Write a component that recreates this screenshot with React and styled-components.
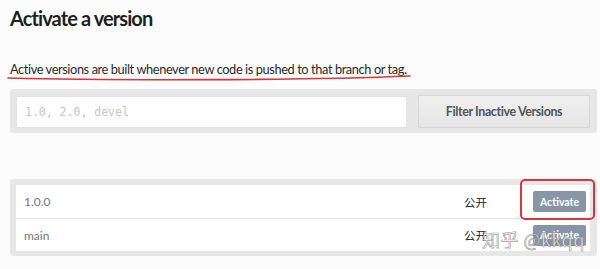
import styled, { createGlobalStyle } from "styled-components";

const GlobalStyle = createGlobalStyle`
  body {
    margin: 0;
    background: #fcfcfc;
    font-family: Lato, "Noto Sans CJK SC", sans-serif;
    color: #404040;
  }
`;

const Page = styled.main`
  width: 587px;
  padding: 4px 0 0 10px;
`;

const Title = styled.h1`
  margin: 0;
  font-size: 20px;
  line-height: 28px;
  font-weight: 700;
  letter-spacing: -0.9px;
  color: #1f1f1f;
`;

const Description = styled.p`
  position: relative;
  width: fit-content;
  margin: 28px 0 0;
  font-size: 12.8px;
  line-height: 18px;
  letter-spacing: -0.4px;
  color: #2b2b2b;
`;

const Scribble = styled.svg`
  position: absolute;
  left: -3px;
  top: 14px;
  pointer-events: none;
`;

const Panel = styled.div`
  position: relative;
  margin-top: ${(p) => p.$top || 0}px;
  padding: 6px 7px 5px 6px;
  background: #e7e7e7;
  border-radius: 3px;
  display: flex;
  flex-direction: ${(p) => (p.$column ? "column" : "row")};
  align-items: ${(p) => (p.$column ? "stretch" : "flex-start")};
  gap: ${(p) => (p.$column ? 0 : 11)}px;
`;

const SearchInput = styled.input`
  flex: 1;
  height: 32px;
  box-sizing: border-box;
  margin: 1px 0 0;
  border: 1px solid #e2e2e2;
  background: #fff;
  padding: 0 8px;
  font-family: "DejaVu Sans Mono", monospace;
  font-size: 11.5px;
  color: #333;
  outline: none;
  &::placeholder {
    color: #c6c6c6;
  }
`;

const FilterButton = styled.button`
  width: 172px;
  height: 33px;
  margin: 0;
  border: 1px solid #d6d6d6;
  border-radius: 2px;
  background: linear-gradient(#efefef, #e6e6e6);
  font-family: Lato, sans-serif;
  font-weight: 700;
  font-size: 12.5px;
  letter-spacing: -0.4px;
  color: #555;
`;

const Row = styled.div`
  display: flex;
  align-items: center;
  height: 33px;
  box-sizing: border-box;
  background: #fff;
  padding: 0 4px 0 8px;
  border-top: ${(p) => (p.$first ? "none" : "1px solid #e4e4e4")};
  font-size: 12px;
`;

const VersionName = styled.span`
  flex: 1;
  color: #777;
`;

const Privacy = styled.span`
  width: 69px;
  font-family: "Noto Sans CJK SC", sans-serif;
  font-size: 11.5px;
  color: #222;
`;

const ActivateButton = styled.button`
  width: 53px;
  height: 21px;
  border: none;
  border-radius: 2px;
  background: #8796a7;
  color: #fff;
  font-family: Lato, sans-serif;
  font-weight: 700;
  font-size: 10.5px;
  padding: 0;
`;

const Highlight = styled.div`
  position: absolute;
  left: 510px;
  top: 0;
  width: 71px;
  height: 37px;
  border: 2px solid #d8353c;
  border-radius: 5px;
  pointer-events: none;
`;

const Watermark = styled.span`
  position: absolute;
  left: 472px;
  top: 47px;
  font-family: "Noto Sans CJK SC", sans-serif;
  font-size: 18px;
  line-height: 26px;
  letter-spacing: 0.5px;
  color: rgba(255, 255, 255, 0.85);
  -webkit-text-stroke: 0.7px rgba(100, 100, 100, 0.6);
  pointer-events: none;
`;

const versions = ["1.0.0", "main"];

export default function App() {
  return (
    <>
      <GlobalStyle />
      <Page>
        <Title>Activate a version</Title>
        <Description>
          Active versions are built whenever new code is pushed to that branch or tag.
          <Scribble width="406" height="9" viewBox="0 0 406 9">
            <path
              d="M1 4 C 100 6.5, 300 6.5, 403 2"
              fill="none"
              stroke="#d8353c"
              strokeWidth="1.6"
              strokeLinecap="round"
            />
          </Scribble>
        </Description>
        <Panel $top={11}>
          <SearchInput placeholder="1.0, 2.0, devel" />
          <FilterButton>Filter Inactive Versions</FilterButton>
        </Panel>
        <Panel $top={46} $column>
          {versions.map((v, i) => (
            <Row key={v} $first={i === 0}>
              <VersionName>{v}</VersionName>
              <Privacy>公开</Privacy>
              <ActivateButton>Activate</ActivateButton>
            </Row>
          ))}
          <Highlight />
          <Watermark>知乎 @kkqq</Watermark>
        </Panel>
      </Page>
    </>
  );
}
